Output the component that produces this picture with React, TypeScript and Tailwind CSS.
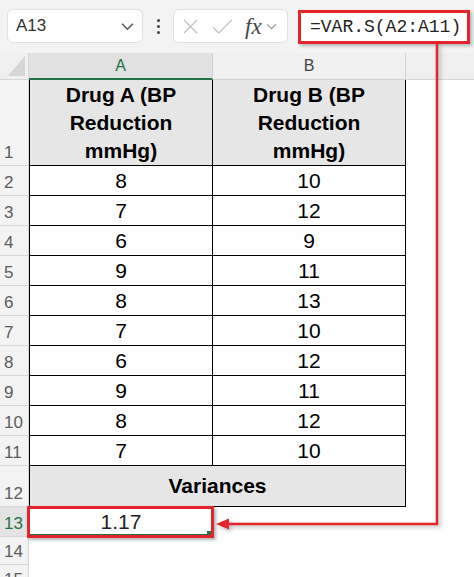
import React from "react";

const data: [number, number][] = [
  [8, 10],
  [7, 12],
  [6, 9],
  [9, 11],
  [8, 13],
  [7, 10],
  [6, 12],
  [9, 11],
  [8, 12],
  [7, 10],
];

function RowHead({ n, active = false }: { n: number; active?: boolean }) {
  return (
    <div
      className={
        "w-[29px] shrink-0 flex items-end pl-[4px] pb-[2px] border-b border-r border-[#d6d6d6] text-[17px] leading-[20px] " +
        (active ? "bg-[#e3e3e3] text-[#217346]" : "bg-[#f3f3f3] text-[#5c5c5c]")
      }
    >
      {n}
    </div>
  );
}

function Chevron({ className = "" }: { className?: string }) {
  return (
    <svg viewBox="0 0 12 8" className={className} fill="none" stroke="currentColor" strokeWidth="1.4">
      <path d="M1 1.5 L6 6.5 L11 1.5" />
    </svg>
  );
}

export default function App() {
  return (
    <div className="relative w-[474px] h-[577px] overflow-hidden bg-white font-['Liberation_Sans',Arial,sans-serif]">
      {/* Toolbar */}
      <div className="h-[53px] bg-[#f3f3f3] flex items-start pt-[9px] pl-[7px]">
        <div className="w-[136px] h-[34px] bg-white rounded-[6px] border border-[#e0e0e0] flex items-center justify-between pl-[8px] pr-[8px] text-[17px] text-[#333]">
          <span>A13</span>
          <Chevron className="w-[13px] h-[9px] text-[#555]" />
        </div>
        <div className="w-[30px] h-[34px] flex flex-col items-center justify-center gap-[3px]">
          <span className="w-[3px] h-[3px] rounded-full bg-[#444]" />
          <span className="w-[3px] h-[3px] rounded-full bg-[#444]" />
          <span className="w-[3px] h-[3px] rounded-full bg-[#444]" />
        </div>
        <div className="w-[115px] h-[34px] bg-white rounded-[6px] border border-[#e0e0e0] flex items-center pl-[9px]">
          <svg viewBox="0 0 16 16" className="w-[15px] h-[15px]" fill="none" stroke="#b5b5b5" strokeWidth="1.2">
            <path d="M1 1 L15 15 M15 1 L1 15" />
          </svg>
          <svg viewBox="0 0 22 16" className="ml-[14px] w-[21px] h-[15px]" fill="none" stroke="#b5b5b5" strokeWidth="1.2">
            <path d="M1 9 L7 15 L21 1" />
          </svg>
          <span className="ml-[12px] font-['Liberation_Serif',serif] italic text-[23px] leading-none text-[#444]">fx</span>
          <Chevron className="ml-[4px] w-[11px] h-[7px] text-[#999]" />
        </div>
        <div className="ml-[10px] mt-[1px] w-[172px] h-[34px] bg-white border-[3px] border-[#e3262b] flex items-center pl-[9px] font-['Liberation_Mono',monospace] text-[18px] text-[#222] shadow-[2px_2px_3px_rgba(0,0,0,0.25)]">
          =VAR.S(A2:A11)
        </div>
      </div>

      {/* Column headers */}
      <div className="flex h-[27px] bg-[#f0f0f0]">
        <div className="w-[29px] shrink-0 relative border-r border-b border-[#d6d6d6]">
          <svg viewBox="0 0 17 20" className="absolute left-[8px] top-[3px] w-[17px] h-[20px]">
            <polygon points="17,0 17,20 0,20" fill="#d6d6d6" />
          </svg>
        </div>
        <div className="w-[184px] shrink-0 bg-[#e1e1e1] border-r border-[#d0d0d0] border-b-2 border-b-[#217346] flex items-center justify-center text-[16px] text-[#217346]">
          A
        </div>
        <div className="w-[193px] shrink-0 border-r border-b border-[#d0d0d0] flex items-center justify-center text-[16px] text-[#444]">
          B
        </div>
        <div className="flex-1 border-b border-[#d6d6d6]" />
      </div>

      {/* Row 1 */}
      <div className="flex h-[86px]">
        <RowHead n={1} />
        <div className="w-[184px] shrink-0 bg-[#e7e6e6] border-l border-b border-r border-black flex items-center justify-center text-center font-bold text-[21px] leading-[28px] text-black">
          Drug A (BP
          <br />
          Reduction
          <br />
          mmHg)
        </div>
        <div className="w-[193px] shrink-0 bg-[#e7e6e6] border-b border-r border-black flex items-center justify-center text-center font-bold text-[21px] leading-[28px] text-black">
          Drug B (BP
          <br />
          Reduction
          <br />
          mmHg)
        </div>
        <div className="flex-1" />
      </div>

      {/* Data rows */}
      {data.map(([a, b], i) => (
        <div key={i} className="flex h-[30px]">
          <RowHead n={i + 2} />
          <div className="w-[184px] shrink-0 border-l border-b border-r border-black flex items-center justify-center text-[21px] text-black">
            {a}
          </div>
          <div className="w-[193px] shrink-0 border-b border-r border-black flex items-center justify-center text-[21px] text-black">
            {b}
          </div>
          <div className="flex-1" />
        </div>
      ))}

      {/* Row 12 */}
      <div className="flex h-[41px]">
        <RowHead n={12} />
        <div className="w-[377px] shrink-0 bg-[#e7e6e6] border-l border-b border-r border-black flex items-center justify-center font-bold text-[21px] text-black">
          Variances
        </div>
        <div className="flex-1" />
      </div>

      {/* Row 13 */}
      <div className="flex h-[30px]">
        <RowHead n={13} active />
        <div className="w-[184px] shrink-0 relative flex items-center justify-center text-[21px] text-[#222]">
          1.17
          <div className="absolute -left-[2px] -top-[1px] -right-[1px] -bottom-[1px] border-[3px] border-[#e3262b] shadow-[2px_2px_3px_rgba(0,0,0,0.3)]">
            <div className="absolute left-0 right-0 bottom-0 h-[1px] bg-[#217346]" />
            <div className="absolute right-0 bottom-0 w-[4px] h-[4px] bg-[#217346]" />
          </div>
        </div>
        <div className="flex-1" />
      </div>

      {/* Rows 14, 15 */}
      <div className="flex h-[28px]">
        <RowHead n={14} />
        <div className="flex-1" />
      </div>
      <div className="flex h-[28px]">
        <RowHead n={15} />
        <div className="flex-1" />
      </div>

      {/* Connector arrow */}
      <svg
        className="absolute inset-0 pointer-events-none drop-shadow-[2px_2px_2px_rgba(0,0,0,0.3)]"
        width="474"
        height="577"
        viewBox="0 0 474 577"
      >
        <path d="M437 43 V524 H226" fill="none" stroke="#e3262b" strokeWidth="2.5" />
        <polygon points="216,524 229,518.5 229,529.5" fill="#e3262b" />
      </svg>
    </div>
  );
}
